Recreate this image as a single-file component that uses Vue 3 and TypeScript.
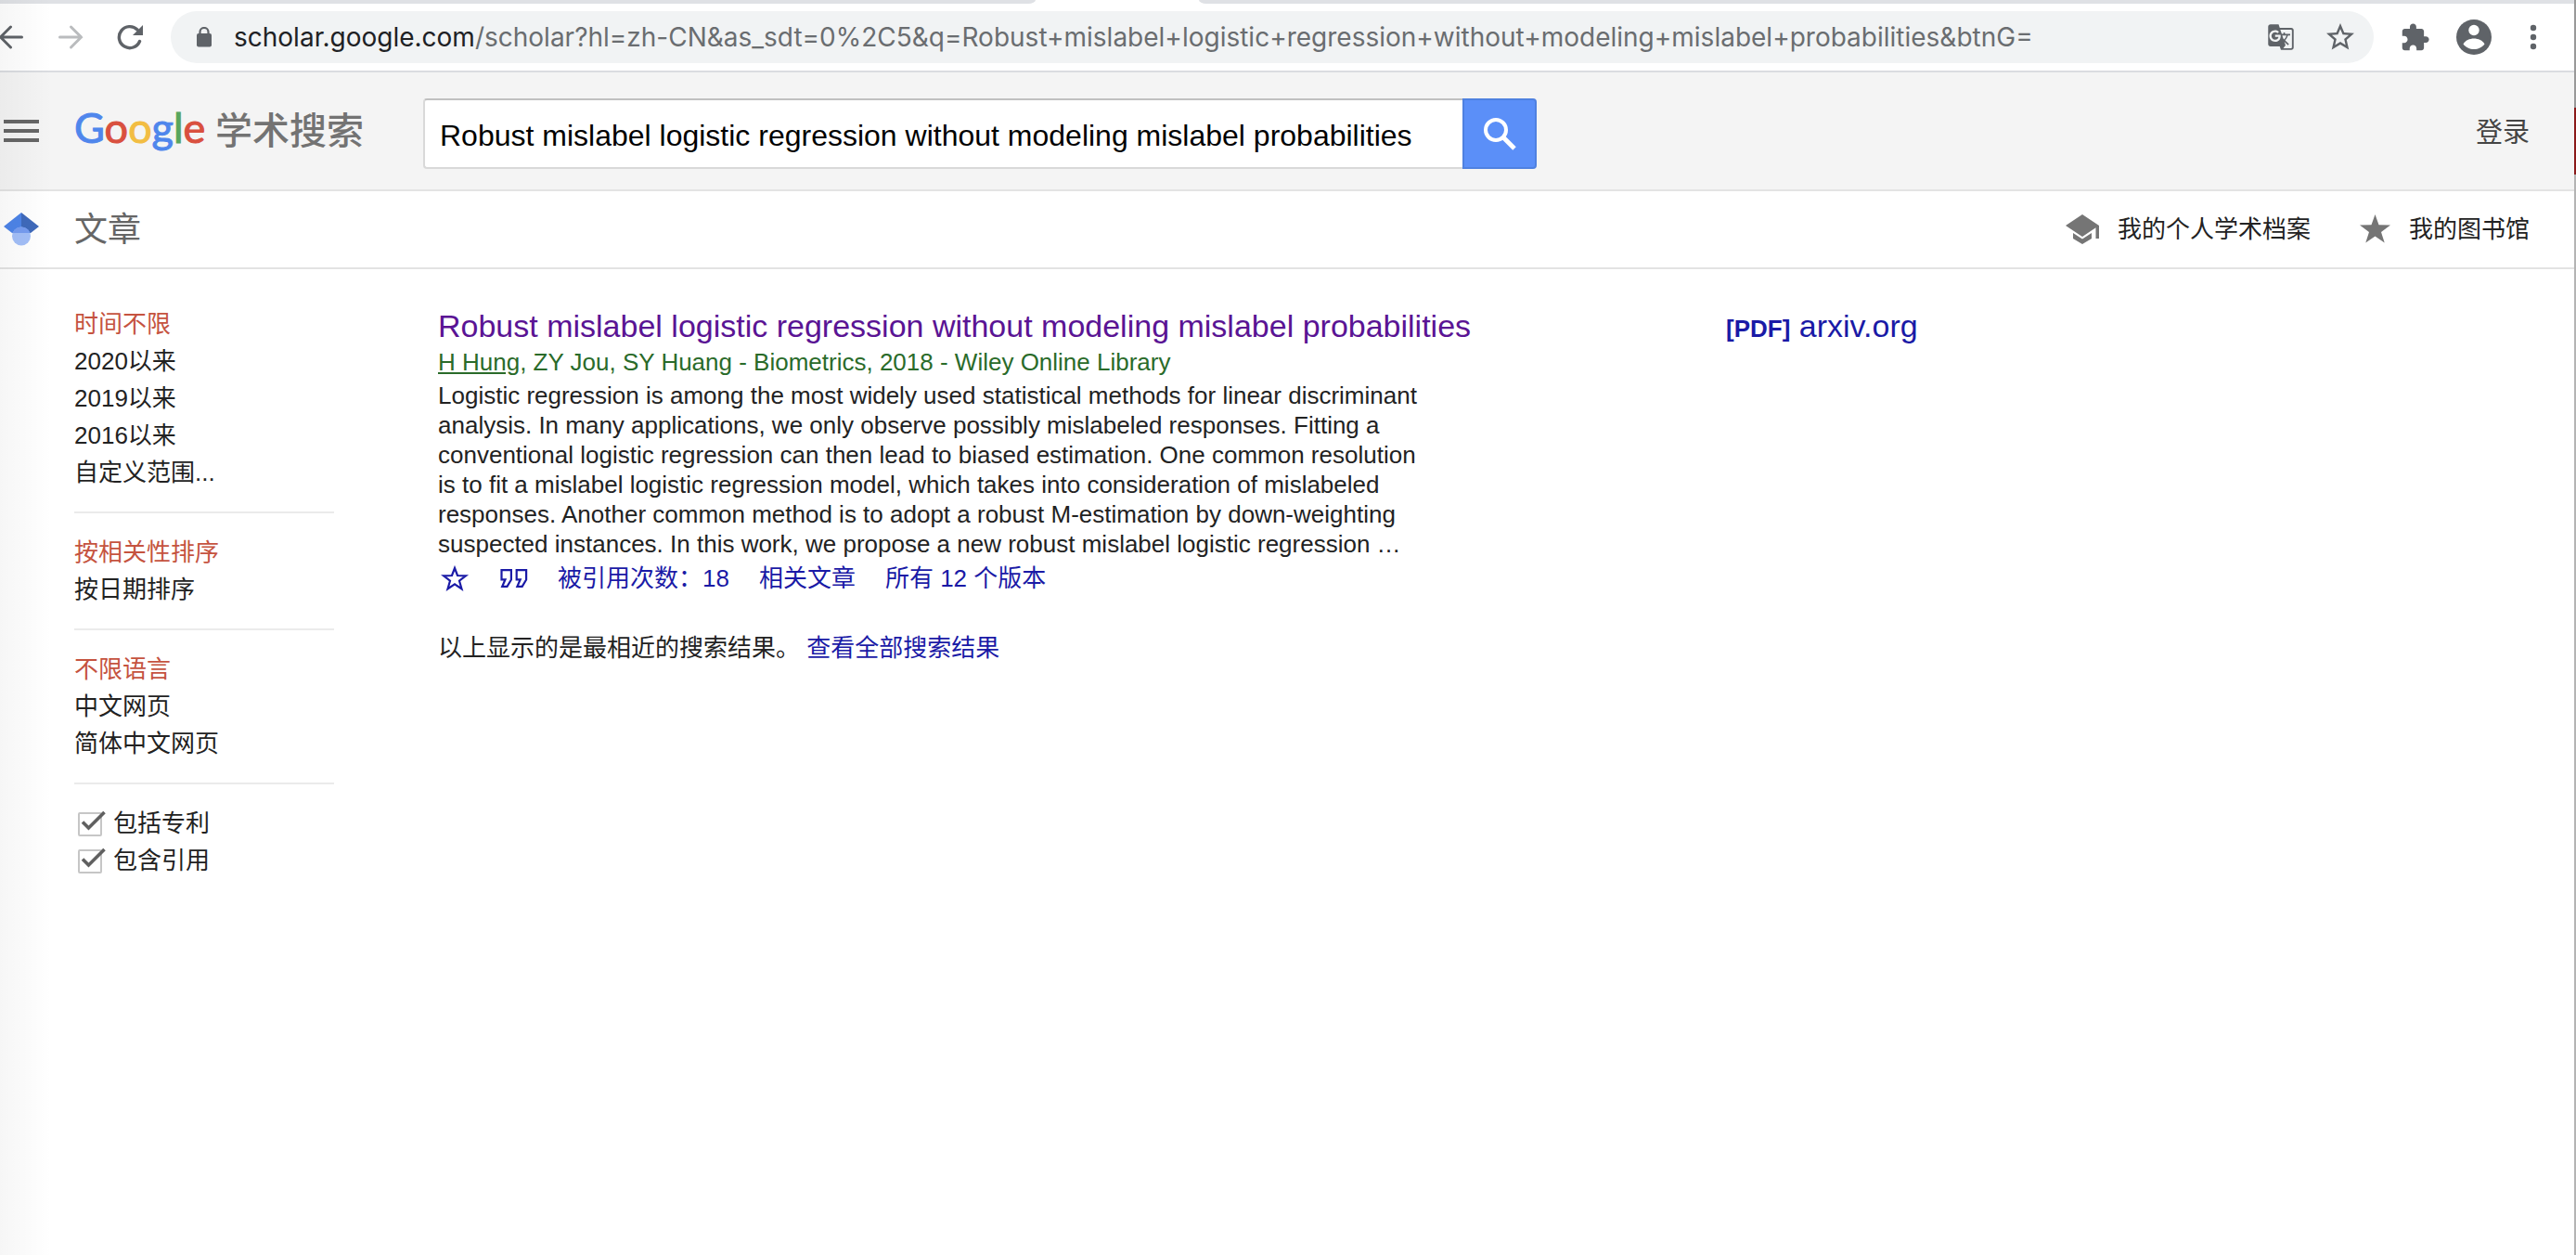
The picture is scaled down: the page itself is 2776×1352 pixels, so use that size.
<script setup lang="ts">
import { ref } from 'vue'

interface FilterGroup {
  name: string
  items: string[]
}

const query = ref('Robust mislabel logistic regression without modeling mislabel probabilities')
const includePatents = ref(true)
const includeCitations = ref(true)

const filters: FilterGroup[] = [
  { name: 'date', items: ['时间不限', '2020以来', '2019以来', '2016以来', '自定义范围...'] },
  { name: 'sort', items: ['按相关性排序', '按日期排序'] },
  { name: 'language', items: ['不限语言', '中文网页', '简体中文网页'] },
]

const abstractLines: string[] = [
  'Logistic regression is among the most widely used statistical methods for linear discriminant',
  'analysis. In many applications, we only observe possibly mislabeled responses. Fitting a',
  'conventional logistic regression can then lead to biased estimation. One common resolution',
  'is to fit a mislabel logistic regression model, which takes into consideration of mislabeled',
  'responses. Another common method is to adopt a robust M-estimation by down-weighting',
  'suspected instances. In this work, we propose a new robust mislabel logistic regression …',
]
</script>

<template>
  <div class="window">
    <div class="tabs">
      <span class="tabs-left"></span>
      <span class="tabs-right"></span>
    </div>

    <div class="toolbar">
      <button class="tool back" aria-label="后退">
        <svg width="28" height="28" viewBox="0 0 28 28" fill="none" stroke="#5f6368" stroke-width="3" stroke-linecap="round">
          <path d="M25.500 14H2.500M13.500 3L2.500 14l11 11" />
        </svg>
      </button>
      <button class="tool forward" aria-label="前进">
        <svg width="28" height="28" viewBox="0 0 28 28" fill="none" stroke="#babcbe" stroke-width="3" stroke-linecap="round">
          <path d="M2.500 14h23M14.500 3l11 11l-11 11" />
        </svg>
      </button>
      <button class="tool reload" aria-label="重新加载">
        <svg width="28" height="28" viewBox="0 0 28 28">
          <path d="M24.500 18.500A11.500 11.500 0 1 1 22 6" fill="none" stroke="#5f6368" stroke-width="3.400" stroke-linecap="round" />
          <path d="M28 1v11H17z" fill="#5f6368" />
        </svg>
      </button>
      <div class="address">
        <svg class="lock" width="16" height="22" viewBox="0 0 16 22">
          <path d="M3.500 9V5.500a4.500 4.500 0 0 1 9 0V9" fill="none" stroke="#5f6368" stroke-width="2.200" />
          <rect y="7" width="16" height="14.500" rx="2" fill="#5f6368" />
        </svg>
        <span class="url"><span class="host">scholar.google.com</span>/scholar?hl=zh-CN&amp;as_sdt=0%2C5&amp;q=Robust+mislabel+logistic+regression+without+modeling+mislabel+probabilities&amp;btnG=</span>
        <button class="tool" aria-label="翻译此页">
          <svg width="30" height="30" viewBox="0 0 24 24" fill="#5f6368">
            <path d="M21 4H11l-1-3H3c-1.100 0-2 .9-2 2v15c0 1.100.9 2 2 2h8l1 3h9c1.100 0 2-.9 2-2V6c0-1.100-.9-2-2-2zM7 16c-2.760 0-5-2.240-5-5s2.240-5 5-5c1.350 0 2.480.5 3.350 1.300L9.030 8.570c-.38-.36-1.040-.78-2.030-.78-1.740 0-3.150 1.440-3.150 3.210S5.260 14.210 7 14.210c2.010 0 2.840-1.440 2.920-2.410H7v-1.710h4.680c.07.31.12.61.12 1.020C11.800 13.970 9.890 16 7 16zm6.170-5.420h3.700c-.43 1.250-1.110 2.430-2.050 3.470-.31-.35-.6-.72-.86-1.100l-.79-2.370zm8.330 9.920c0 .55-.45 1-1 1H14l2-2.500-1.040-3.100 3.100 3.100.92-.92-3.300-3.250.02-.02c1.130-1.250 1.930-2.690 2.400-4.220H20v-1.300h-4.530V8h-1.290v1.290h-1.440L11.460 5.500h9.040c.55 0 1 .45 1 1v14z" />
          </svg>
        </button>
        <button class="tool bookmark" aria-label="为此标签页添加书签">
          <svg width="36" height="36" viewBox="0 0 24 24" fill="#5f6368">
            <path d="M22 9.240l-7.190-.62L12 2 9.190 8.630 2 9.240l5.460 4.730L5.820 21 12 17.270 18.180 21l-1.630-7.030L22 9.240zM12 15.400l-3.760 2.270 1-4.280-3.320-2.880 4.380-.38L12 6.100l1.710 4.040 4.380.38-3.320 2.880 1 4.280L12 15.400z" />
          </svg>
        </button>
      </div>
      <button class="tool extensions" aria-label="扩展程序">
        <svg width="33" height="33" viewBox="0 0 24 24" fill="#5f6368">
          <path d="M20.500 11H19V7c0-1.100-.9-2-2-2h-4V3.500C13 2.120 11.880 1 10.500 1S8 2.120 8 3.500V5H4c-1.100 0-1.990.9-1.990 2v3.800H3.500c1.490 0 2.700 1.210 2.700 2.700s-1.210 2.700-2.700 2.700H2V20c0 1.100.9 2 2 2h3.800v-1.500c0-1.490 1.210-2.700 2.700-2.700 1.490 0 2.700 1.210 2.700 2.700V22H17c1.100 0 2-.9 2-2v-4h1.500c1.380 0 2.500-1.120 2.500-2.500S21.880 11 20.500 11z" />
        </svg>
      </button>
      <button class="tool account" aria-label="个人资料">
        <svg width="38" height="38" viewBox="0 0 38 38">
          <circle cx="19" cy="19" r="19" fill="#5f6368" />
          <circle cx="19" cy="11.500" r="5.700" fill="#fff" />
          <path d="M7.500 26.500C9.500 22.500 14.500 20.500 19 20.500s9.500 2 11.500 6C28 30 23.500 32 19 32S10 30 7.500 26.500z" fill="#fff" />
        </svg>
      </button>
      <button class="tool more" aria-label="更多">
        <svg width="8" height="28" viewBox="0 0 8 28" fill="#5f6368">
          <circle cx="4" cy="4" r="3.200" /><circle cx="4" cy="14" r="3.200" /><circle cx="4" cy="24" r="3.200" />
        </svg>
      </button>
    </div>

    <header class="header">
      <button class="menu" aria-label="选项"><span></span><span></span><span></span></button>
      <a class="brand" href="#">
        <span class="google"><span class="blue">G</span><span class="red">o</span><span class="yellow">o</span><span class="blue">g</span><span class="green">l</span><span class="red">e</span></span>
        <span class="product">学术搜索</span>
      </a>
      <form class="search" role="search" @submit.prevent>
        <input v-model="query" type="text" aria-label="搜索" />
        <button type="submit" aria-label="搜索">
          <svg width="36" height="36" viewBox="0 0 36 36" fill="none" stroke="#fff">
            <circle cx="14" cy="14" r="11" stroke-width="4" />
            <path d="M22 22l12 12" stroke-width="5" />
          </svg>
        </button>
      </form>
      <a class="login" href="#">登录</a>
    </header>

    <div class="subheader">
      <a class="mark" href="#" aria-label="Google 学术搜索首页">
        <svg width="38" height="36" viewBox="0 0 38 36">
          <path d="M19 0L0 15l9 7h10z" fill="#4d84e8" />
          <path d="M19 0l19 15-9 7H19z" fill="#3f6abb" />
          <circle cx="19" cy="25.500" r="10" fill="#a3bff8" />
          <path d="M9.600 22a10 10 0 0 1 18.800 0z" fill="#769cf0" />
        </svg>
      </a>
      <h1>文章</h1>
      <nav class="personal">
        <a href="#">
          <svg width="36" height="32" viewBox="0 0 36 32" fill="#757575">
            <path d="M18 0L0 12l18 12 14.500-9.700V26H36V12z" />
            <path d="M8 20l10 6.500L28 20v6L18 32 8 26z" />
          </svg>
          <span>我的个人学术档案</span>
        </a>
        <a href="#">
          <svg width="36" height="32" viewBox="0 0 36 32" fill="#757575">
            <path d="M19.500 0l4 11.300 12.500.2-10 7.500 3.700 11.500-10.200-7-10.200 7L13 19 3 11.500l12.500-.2z" />
          </svg>
          <span>我的图书馆</span>
        </a>
      </nav>
    </div>

    <div class="body">
      <aside class="sidebar">
        <ul v-for="group in filters" :key="group.name">
          <li v-for="(item, index) in group.items" :key="item">
            <a href="#" :class="{ current: index === 0 }">{{ item }}</a>
          </li>
        </ul>
        <div class="checks">
          <label>
            <span class="box">
              <input v-model="includePatents" type="checkbox" />
              <svg v-if="includePatents" width="32" height="32" viewBox="0 0 32 32"><path d="M5 16.500l6.500 6.500L28.500 6" fill="none" stroke="#606060" stroke-width="3.600" /></svg>
            </span>
            包括专利
          </label>
          <label>
            <span class="box">
              <input v-model="includeCitations" type="checkbox" />
              <svg v-if="includeCitations" width="32" height="32" viewBox="0 0 32 32"><path d="M5 16.500l6.500 6.500L28.500 6" fill="none" stroke="#606060" stroke-width="3.600" /></svg>
            </span>
            包含引用
          </label>
        </div>
      </aside>

      <main class="results">
        <article class="result">
          <div class="entry">
            <h2><a href="#">Robust mislabel logistic regression without modeling mislabel probabilities</a></h2>
            <div class="meta"><a href="#">H Hung</a>, ZY Jou, SY Huang - Biometrics, 2018 - Wiley Online Library</div>
            <p class="abstract">
              <template v-for="line in abstractLines" :key="line">{{ line }}<br /></template>
            </p>
            <div class="actions">
              <button class="save" aria-label="保存">
                <svg width="32" height="28" viewBox="0 0 32 28" fill="none" stroke="#1a1aa6" stroke-width="2.200">
                  <path d="M15 3l3 8 9 .3-7 5.400 2.500 8.600L15 20.300l-7.500 5 2.500-8.600-7-5.400 9-.3z" />
                </svg>
              </button>
              <button class="cite" aria-label="引用">
                <svg width="30" height="20" viewBox="0 0 30 20" fill="none" stroke="#1a1aa6" stroke-width="2.200">
                  <path d="M1.500 1.100h10.400v10.400L7.500 18.900H2.200L5.500 11.300h-4zM17.700 1.100h10.400v10.400l-4.400 7.400h-5.300l3.300-7.600h-4z" />
                </svg>
              </button>
              <a href="#">被引用次数：18</a>
              <a href="#">相关文章</a>
              <a href="#">所有 12 个版本</a>
            </div>
          </div>
          <div class="source"><a href="#"><b>[PDF]</b> arxiv.org</a></div>
        </article>
        <p class="notice">以上显示的是最相近的搜索结果。 <a href="#">查看全部搜索结果</a></p>
      </main>
    </div>

    <div class="shade"></div>
    <div class="edge"></div>
  </div>
</template>

<style>
body {
  margin: 0;
  background: #fff;
}
</style>

<style scoped>
.window {
  position: relative;
  min-height: 100vh;
  overflow: hidden;
  font-family: "Liberation Sans", "Noto Sans CJK SC", sans-serif;
  font-size: 26px;
  color: #222;
}
.window * {
  box-sizing: border-box;
}
a {
  color: inherit;
  text-decoration: none;
}
button {
  padding: 0;
  border: 0;
  background: none;
  cursor: pointer;
}
svg {
  display: block;
  flex: none;
}

/* Browser chrome */
.tabs {
  display: flex;
  height: 4px;
}
.tabs-left {
  width: 1116px;
  background: #dfe1e5;
  border-bottom-right-radius: 8px 4px;
}
.tabs-right {
  flex: 1;
  margin-left: 176px;
  background: #dfe1e5;
  border-bottom-left-radius: 8px 4px;
}
.toolbar {
  display: flex;
  align-items: center;
  height: 74px;
  padding-right: 42px;
  border-bottom: 2px solid #dadce0;
}
.back {
  margin-left: -2px;
}
.forward {
  margin-left: 36px;
}
.reload {
  margin-left: 36px;
}
.address {
  display: flex;
  flex: 1;
  align-items: center;
  min-width: 0;
  height: 56px;
  margin-left: 30px;
  padding: 0 18px 0 28px;
  border-radius: 28px;
  background: #f1f3f4;
}
.url {
  flex: 1;
  min-width: 0;
  margin-left: 24px;
  overflow: hidden;
  font-family: Inter, sans-serif;
  font-size: 28px;
  line-height: 40px;
  color: #6a6d70;
  white-space: nowrap;
}
.host {
  color: #202124;
}
.bookmark {
  margin-left: 31px;
}
.extensions {
  margin-left: 28px;
}
.account {
  margin-left: 28px;
}
.more {
  margin-left: 41px;
}

/* Page header */
.header {
  display: flex;
  align-items: center;
  height: 128px;
  padding: 0 50px 0 4px;
  border-bottom: 2px solid #e3e3e3;
  background: #f4f4f4;
}
.menu {
  display: flex;
  flex-direction: column;
  gap: 6px;
  width: 38px;
}
.menu span {
  height: 4px;
  background: #666;
}
.brand {
  display: flex;
  align-items: center;
  width: 376px;
  margin-left: 38px;
  white-space: nowrap;
}
.google {
  width: 152px;
  padding-bottom: 8px;
  font-family: Lato, sans-serif;
  font-size: 45px;
  line-height: 56px;
  -webkit-text-stroke: 1px currentColor;
}
.blue {
  color: #4f86ec;
}
.red {
  color: #d9503f;
}
.yellow {
  color: #f2bd42;
}
.green {
  color: #58a55c;
}
.product {
  font-size: 40px;
  font-weight: 500;
  line-height: 56px;
  color: #737373;
}
.search {
  display: flex;
  flex: none;
  width: 1200px;
  height: 76px;
  margin-top: 6px;
}
.search input {
  flex: 1;
  min-width: 0;
  padding: 4px 16px 0;
  border: 2px solid #d9d9d9;
  border-top-color: #c0c0c0;
  border-right: 0;
  border-radius: 4px 0 0 4px;
  outline: none;
  background: #fff;
  font-family: inherit;
  font-size: 32px;
  color: #000;
}
.search button {
  display: flex;
  align-items: center;
  justify-content: center;
  width: 80px;
  border: 2px solid #4f81e0;
  border-radius: 0 4px 4px 0;
  background: #5b8ff8;
}
.login {
  margin-top: 4px;
  margin-left: auto;
  font-size: 29px;
  line-height: 40px;
  color: #444;
}
.subheader {
  display: flex;
  align-items: center;
  height: 84px;
  padding: 0 50px 0 4px;
  border-bottom: 2px solid #e3e3e3;
}
h1 {
  margin: 2px 0 0 38px;
  font-size: 36px;
  font-weight: 400;
  line-height: 48px;
  color: #666;
}
.personal {
  display: flex;
  gap: 50px;
  margin-left: auto;
}
.personal a {
  display: flex;
  align-items: center;
  gap: 20px;
  line-height: 40px;
}

/* Filters */
.body {
  display: flex;
  padding: 39px 50px 0 80px;
}
.sidebar {
  flex: none;
  width: 280px;
  line-height: 40px;
}
.sidebar ul {
  margin: 0 0 22px;
  padding: 0 0 22px;
  border-bottom: 2px solid #ebebeb;
  list-style: none;
}
.current {
  color: #c5533f;
}
.checks label {
  display: flex;
  align-items: center;
  gap: 12px;
}
.box {
  position: relative;
  width: 26px;
  height: 26px;
  margin-top: 2px;
  margin-left: 4px;
}
.box input {
  display: block;
  width: 26px;
  height: 26px;
  margin: 0;
  border: 2px solid #c6c6c6;
  border-radius: 2px;
  appearance: none;
}
.box svg {
  position: absolute;
  bottom: 0;
  left: 0;
  pointer-events: none;
}

/* Results */
.results {
  flex: 1;
  margin-left: 112px;
}
.result {
  display: flex;
}
.entry {
  width: 1388px;
}
h2 {
  margin: 0;
  font-size: 34px;
  font-weight: 400;
  line-height: 44px;
  color: #5a1494;
}
.meta {
  line-height: 34px;
  color: #2a6b2a;
}
.meta a {
  text-decoration: underline;
}
.abstract {
  margin: 3px 0 0;
  line-height: 32px;
}
.actions {
  display: flex;
  align-items: center;
  gap: 32px;
  height: 42px;
  line-height: 42px;
  color: #1a1aa6;
}
.save {
  margin-left: 3px;
}
.source {
  font-size: 34px;
  line-height: 44px;
  color: #1a1aa6;
}
.source b {
  font-size: 26px;
}
.notice {
  margin: 33px 0 0;
  line-height: 42px;
}
.notice a {
  color: #1a1aa6;
}

/* Shadow and backdrop at the window's sides */
.shade {
  position: absolute;
  top: 0;
  bottom: 0;
  left: 0;
  width: 56px;
  background: linear-gradient(to right, rgba(0, 0, 0, 0.035), transparent);
  pointer-events: none;
}
.edge {
  position: absolute;
  top: 0;
  right: 0;
  bottom: 0;
  width: 2px;
  background: linear-gradient(#999 116px, #8b1a1a 116px, #8b1a1a 188px, #b4b4b4 188px);
}
</style>
